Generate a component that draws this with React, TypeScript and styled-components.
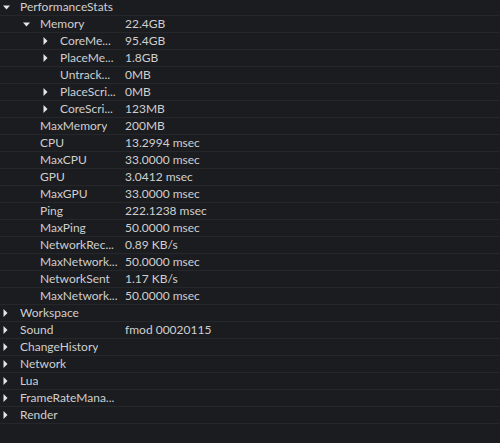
import React from "react";
import styled, { createGlobalStyle } from "styled-components";

const Global = createGlobalStyle`
  html, body { margin: 0; padding: 0; background: #1b1c20; }
  body { font-family: Lato, "Noto Sans", sans-serif; }
`;

const Panel = styled.div`
  width: 500px;
  height: 443px;
  background: #1b1c20;
  overflow: hidden;
`;

const List = styled.div`
  display: flex;
  flex-direction: column;
  margin-top: -1px;
`;

const Row = styled.div`
  display: flex;
  align-items: center;
  height: 16px;
  border-bottom: 1px solid #26272b;
  color: #cfcfcf;
  font-size: 12px;
  line-height: 16px;
  white-space: nowrap;
`;

const NameCell = styled.div<{ $depth: number }>`
  display: flex;
  align-items: center;
  width: 125px;
  padding-left: ${(p) => p.$depth * 20}px;
  box-sizing: border-box;
  flex: none;
  overflow: hidden;
`;

const Toggle = styled.span`
  width: 20px;
  height: 16px;
  display: flex;
  align-items: center;
  justify-content: flex-start;
  padding-left: 3px;
  box-sizing: border-box;
  flex: none;
`;

const Label = styled.span`
  overflow: hidden;
`;

const Value = styled.span`
  flex: 1;
`;

type Node = { name: string; value?: string; depth: number; arrow?: "open" | "closed" };

const rows: Node[] = [
  { name: "PerformanceStats", depth: 0, arrow: "open" },
  { name: "Memory", value: "22.4GB", depth: 1, arrow: "open" },
  { name: "CoreMe...", value: "95.4GB", depth: 2, arrow: "closed" },
  { name: "PlaceMe...", value: "1.8GB", depth: 2, arrow: "closed" },
  { name: "Untrack...", value: "0MB", depth: 2 },
  { name: "PlaceScri...", value: "0MB", depth: 2, arrow: "closed" },
  { name: "CoreScri...", value: "123MB", depth: 2, arrow: "closed" },
  { name: "MaxMemory", value: "200MB", depth: 1 },
  { name: "CPU", value: "13.2994 msec", depth: 1 },
  { name: "MaxCPU", value: "33.0000 msec", depth: 1 },
  { name: "GPU", value: "3.0412 msec", depth: 1 },
  { name: "MaxGPU", value: "33.0000 msec", depth: 1 },
  { name: "Ping", value: "222.1238 msec", depth: 1 },
  { name: "MaxPing", value: "50.0000 msec", depth: 1 },
  { name: "NetworkRec...", value: "0.89 KB/s", depth: 1 },
  { name: "MaxNetwork...", value: "50.0000 msec", depth: 1 },
  { name: "NetworkSent", value: "1.17 KB/s", depth: 1 },
  { name: "MaxNetwork...", value: "50.0000 msec", depth: 1 },
  { name: "Workspace", depth: 0, arrow: "closed" },
  { name: "Sound", value: "fmod 00020115", depth: 0, arrow: "closed" },
  { name: "ChangeHistory", depth: 0, arrow: "closed" },
  { name: "Network", depth: 0, arrow: "closed" },
  { name: "Lua", depth: 0, arrow: "closed" },
  { name: "FrameRateMana...", depth: 0, arrow: "closed" },
  { name: "Render", depth: 0, arrow: "closed" },
];

const Arrow = ({ kind }: { kind?: "open" | "closed" }) => {
  if (!kind) return null;
  if (kind === "open")
    return (
      <svg width="7" height="5" viewBox="0 0 7 5">
        <path d="M0 0.5 H7 L3.5 4.5 Z" fill="#e6e6e6" />
      </svg>
    );
  return (
    <svg width="5" height="8" viewBox="0 0 5 8">
      <path d="M0.5 0 V8 L4.5 4 Z" fill="#e6e6e6" />
    </svg>
  );
};

export default function App() {
  return (
    <>
      <Global />
      <Panel>
        <List>
          {rows.map((r, i) => (
            <Row key={i}>
              <NameCell $depth={r.depth}>
                <Toggle>
                  <Arrow kind={r.arrow} />
                </Toggle>
                <Label>{r.name}</Label>
              </NameCell>
              <Value>{r.value ?? ""}</Value>
            </Row>
          ))}
        </List>
      </Panel>
    </>
  );
}
